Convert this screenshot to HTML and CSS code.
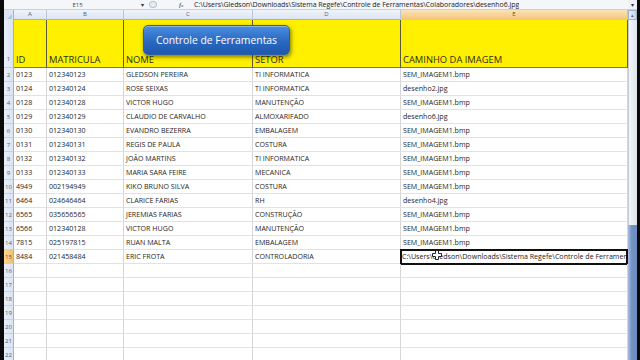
FILE: index.html
```html
<!DOCTYPE html>
<html lang="pt-BR">
<head>
  <meta charset="UTF-8">
  <title>Controle de Ferramentas - Colaboradores</title>
  <link rel="stylesheet" href="styles.css">
</head>
<body>
  <div class="frame">
    <div class="edge left"></div>

    <div class="workbook">
      <div class="formula-bar">
        <div class="name-box">E15</div>
        <div class="fx-tools">
          <span class="drop">&#9662;</span>
          <span class="dim-btn"></span>
          <span class="fx">f<small>x</small></span>
        </div>
        <div class="formula">C:\Users\Gledson\Downloads\Sistema Regefe\Controle de Ferramentas\Colaboradores\desenho6.jpg</div>
      </div>

      <div class="sheet">
        <div class="row col-heads">
          <div class="corner"></div>
          <div class="col-head">A</div>
          <div class="col-head">B</div>
          <div class="col-head">C</div>
          <div class="col-head">D</div>
          <div class="col-head active">E</div>
        </div>

        <div class="row title-row">
          <div class="row-head">1</div>
          <div class="cell title">ID</div>
          <div class="cell title">MATRICULA</div>
          <div class="cell title">NOME</div>
          <div class="cell title">SETOR</div>
          <div class="cell title">CAMINHO DA IMAGEM</div>
        </div>

        <div id="linhas"></div>

        <button class="macro-btn">Controle de Ferramentas</button>

        <svg class="cursor" width="10" height="10" viewBox="0 0 10 10">
          <path d="M3.5 0.5h3v3h3v3h-3v3h-3v-3h-3v-3h3z" fill="#fff" stroke="#222" stroke-width="1"/>
        </svg>
      </div>
    </div>

    <div class="vscroll">
      <div class="sb-top">&#9662;</div>
      <div class="sb-arrow">&#9652;</div>
      <div class="sb-thumb"></div>
      <div class="sb-track"></div>
    </div>

    <div class="edge right"></div>
  </div>

  <script>
    const colaboradores = [
      ["0123", "012340123", "GLEDSON PEREIRA", "TI INFORMATICA", "SEM_IMAGEM1.bmp"],
      ["0124", "012340124", "ROSE SEIXAS", "TI INFORMATICA", "desenho2.jpg"],
      ["0128", "012340128", "VICTOR HUGO", "MANUTENÇÃO", "SEM_IMAGEM1.bmp"],
      ["0129", "012340129", "CLAUDIO DE CARVALHO", "ALMOXARIFADO", "desenho6.jpg"],
      ["0130", "012340130", "EVANDRO BEZERRA", "EMBALAGEM", "SEM_IMAGEM1.bmp"],
      ["0131", "012340131", "REGIS DE PAULA", "COSTURA", "SEM_IMAGEM1.bmp"],
      ["0132", "012340132", "JOÃO MARTINS", "TI INFORMATICA", "SEM_IMAGEM1.bmp"],
      ["0133", "012340133", "MARIA SARA FEIRE", "MECANICA", "SEM_IMAGEM1.bmp"],
      ["4949", "002194949", "KIKO BRUNO SILVA", "COSTURA", "SEM_IMAGEM1.bmp"],
      ["6464", "024646464", "CLARICE FARIAS", "RH", "desenho4.jpg"],
      ["6565", "035656565", "JEREMIAS FARIAS", "CONSTRUÇÃO", "SEM_IMAGEM1.bmp"],
      ["6566", "012340128", "VICTOR HUGO", "MANUTENÇÃO", "SEM_IMAGEM1.bmp"],
      ["7815", "025197815", "RUAN MALTA", "EMBALAGEM", "SEM_IMAGEM1.bmp"],
      ["8484", "021458484", "ERIC FROTA", "CONTROLADORIA", "C:\\Users\\Gledson\\Downloads\\Sistema Regefe\\Controle de Ferramentas\\Colaboradores\\desenho6.jpg"]
    ];

    const linhas = document.getElementById("linhas");

    for (let n = 2; n <= 22; n++) {
      const dados = colaboradores[n - 2] || ["", "", "", "", ""];
      const row = document.createElement("div");
      row.className = "row";
      const ativa = n === 15;

      row.innerHTML = `
        <div class="row-head${ativa ? " active" : ""}">${n}</div>
        <div class="cell">${dados[0]}</div>
        <div class="cell">${dados[1]}</div>
        <div class="cell">${dados[2]}</div>
        <div class="cell">${dados[3]}</div>
        <div class="cell${ativa ? " selected" : ""}">${dados[4]}</div>
      `;

      linhas.appendChild(row);
    }
  </script>
</body>
</html>
```

FILE: styles.css
```css
body {
  margin: 0;
  font-family: "Open Sans", "Liberation Sans", sans-serif;
  background: #000;
  overflow: hidden;
}

.frame {
  display: flex;
  width: 640px;
  height: 360px;
}

.edge.left {
  width: 4px;
  background: #0a0a0a;
}

.edge.right {
  width: 3px;
  background: #0a0a0a;
}

.workbook {
  width: 624px;
  display: flex;
  flex-direction: column;
  background: #fff;
}

/* barra de formulas */
.formula-bar {
  height: 10px;
  flex-shrink: 0;
  display: flex;
  align-items: center;
  background: #f4f6fa;
  border-bottom: 1px solid #c5d1e0;
  box-sizing: border-box;
  font-size: 7px;
  color: #222;
}

.name-box {
  width: 137px;
  text-align: center;
  color: #444;
  font-size: 6px;
  padding-left: 10px;
  box-sizing: border-box;
}

.fx-tools {
  width: 53px;
  display: flex;
  align-items: center;
  gap: 5px;
  color: #666;
}

.drop {
  font-size: 6px;
  color: #333;
}

.dim-btn {
  width: 8px;
  height: 7px;
  border-radius: 50%;
  border: 1px solid #b5c0cf;
  background: #e8ecf2;
  box-sizing: border-box;
}

.fx {
  margin-left: 17px;
  font-style: italic;
  font-family: "Liberation Serif", serif;
  font-size: 7px;
  color: #333;
}

.fx small {
  font-size: 5px;
}

.formula {
  white-space: nowrap;
  overflow: hidden;
  letter-spacing: -0.05px;
}

/* planilha */
.sheet {
  position: relative;
  flex: 1;
  overflow: hidden;
}

.row {
  display: grid;
  grid-template-columns: 10px 33px 77px 129px 148px 227px;
  grid-template-rows: 14px;
  height: 14px;
}

.col-heads {
  height: 10px;
  grid-template-rows: 10px;
  background: linear-gradient(#f0f4fa, #dbe5f2);
  border-bottom: 1px solid #9fb4cc;
  box-sizing: border-box;
}

.corner {
  background: #dde6f2;
  border-right: 1px solid #9fb4cc;
  position: relative;
}

.corner::after {
  content: "";
  position: absolute;
  right: 1px;
  bottom: 1px;
  border-left: 5px solid transparent;
  border-bottom: 5px solid #b8c8dc;
}

.col-head {
  font-size: 6px;
  color: #4e5f77;
  text-align: center;
  line-height: 9px;
  border-right: 1px solid #b9c7da;
}

.col-head.active {
  background: linear-gradient(#fbe3b6, #f3c47a);
  color: #6b5324;
}

.row-head {
  font-size: 6px;
  color: #4f6079;
  background: linear-gradient(90deg, #e9f0fa, #d9e4f2);
  border-right: 1px solid #9fb4cc;
  border-bottom: 1px solid #c3d1e2;
  text-align: center;
  line-height: 14px;
  box-sizing: border-box;
}

.row-head.active {
  background: linear-gradient(90deg, #fad79a, #f2c06c);
  color: #6b5324;
}

.cell {
  font-size: 7.1px;
  color: #262626;
  padding-left: 2px;
  line-height: 13px;
  border-right: 1px solid #d6d6d6;
  border-bottom: 1px solid #e2e2e2;
  white-space: nowrap;
  overflow: hidden;
  box-sizing: border-box;
}

.cell.selected {
  border: 2px solid #111;
  line-height: 11px;
  padding-left: 0;
  margin-left: -1px;
  margin-top: -1px;
  height: 16px;
  width: 228px;
  color: #1a1a1a;
}

.title-row {
  height: 48px;
  grid-template-rows: 48px;
}

.title-row .row-head {
  display: flex;
  align-items: flex-end;
  justify-content: center;
  line-height: 12px;
  padding-bottom: 2px;
}

.cell.title {
  background: #fff000;
  font-size: 9.4px;
  color: #2e2e10;
  display: flex;
  align-items: flex-end;
  padding-bottom: 1px;
  line-height: 12px;
  border-right: 1px solid #5c5c3c;
  border-bottom: 1px solid #7a7a50;
}

/* botao da macro */
.macro-btn {
  position: absolute;
  left: 139px;
  top: 15px;
  width: 147px;
  height: 30px;
  border: 1px solid #2c5ea6;
  border-radius: 5px;
  background: linear-gradient(#4a8ee0, #2a69c2 55%, #1f58ad);
  box-shadow: 1px 2px 4px rgba(40, 40, 0, 0.6), inset 0 1px 0 rgba(255, 255, 255, 0.35);
  color: #fff;
  font-family: "Open Sans", sans-serif;
  font-size: 10.4px;
  padding: 0;
}

.cursor {
  position: absolute;
  left: 428px;
  top: 240px;
}

/* barra de rolagem */
.vscroll {
  width: 9px;
  display: flex;
  flex-direction: column;
  background: #fff;
}

.sb-top {
  height: 10px;
  flex-shrink: 0;
  font-size: 6px;
  text-align: center;
  line-height: 10px;
  color: #333;
  background: #eef2f8;
  border-bottom: 1px solid #c5d1e0;
  box-sizing: border-box;
}

.sb-arrow {
  height: 10px;
  flex-shrink: 0;
  font-size: 5px;
  line-height: 8px;
  text-align: center;
  color: #55667e;
  background: linear-gradient(90deg, #e6edf7, #c9d6e8);
  border: 1px solid #9fb4cc;
  box-sizing: border-box;
}

.sb-thumb {
  height: 205px;
  flex-shrink: 0;
  background: linear-gradient(90deg, #f3f5f8, #dde3ec);
  border-left: 1px solid #c3ccd8;
  box-sizing: border-box;
}

.sb-track {
  flex: 1;
  background: linear-gradient(90deg, #a9bfe0, #7393c6 40%, #6c8cc0);
}
```
